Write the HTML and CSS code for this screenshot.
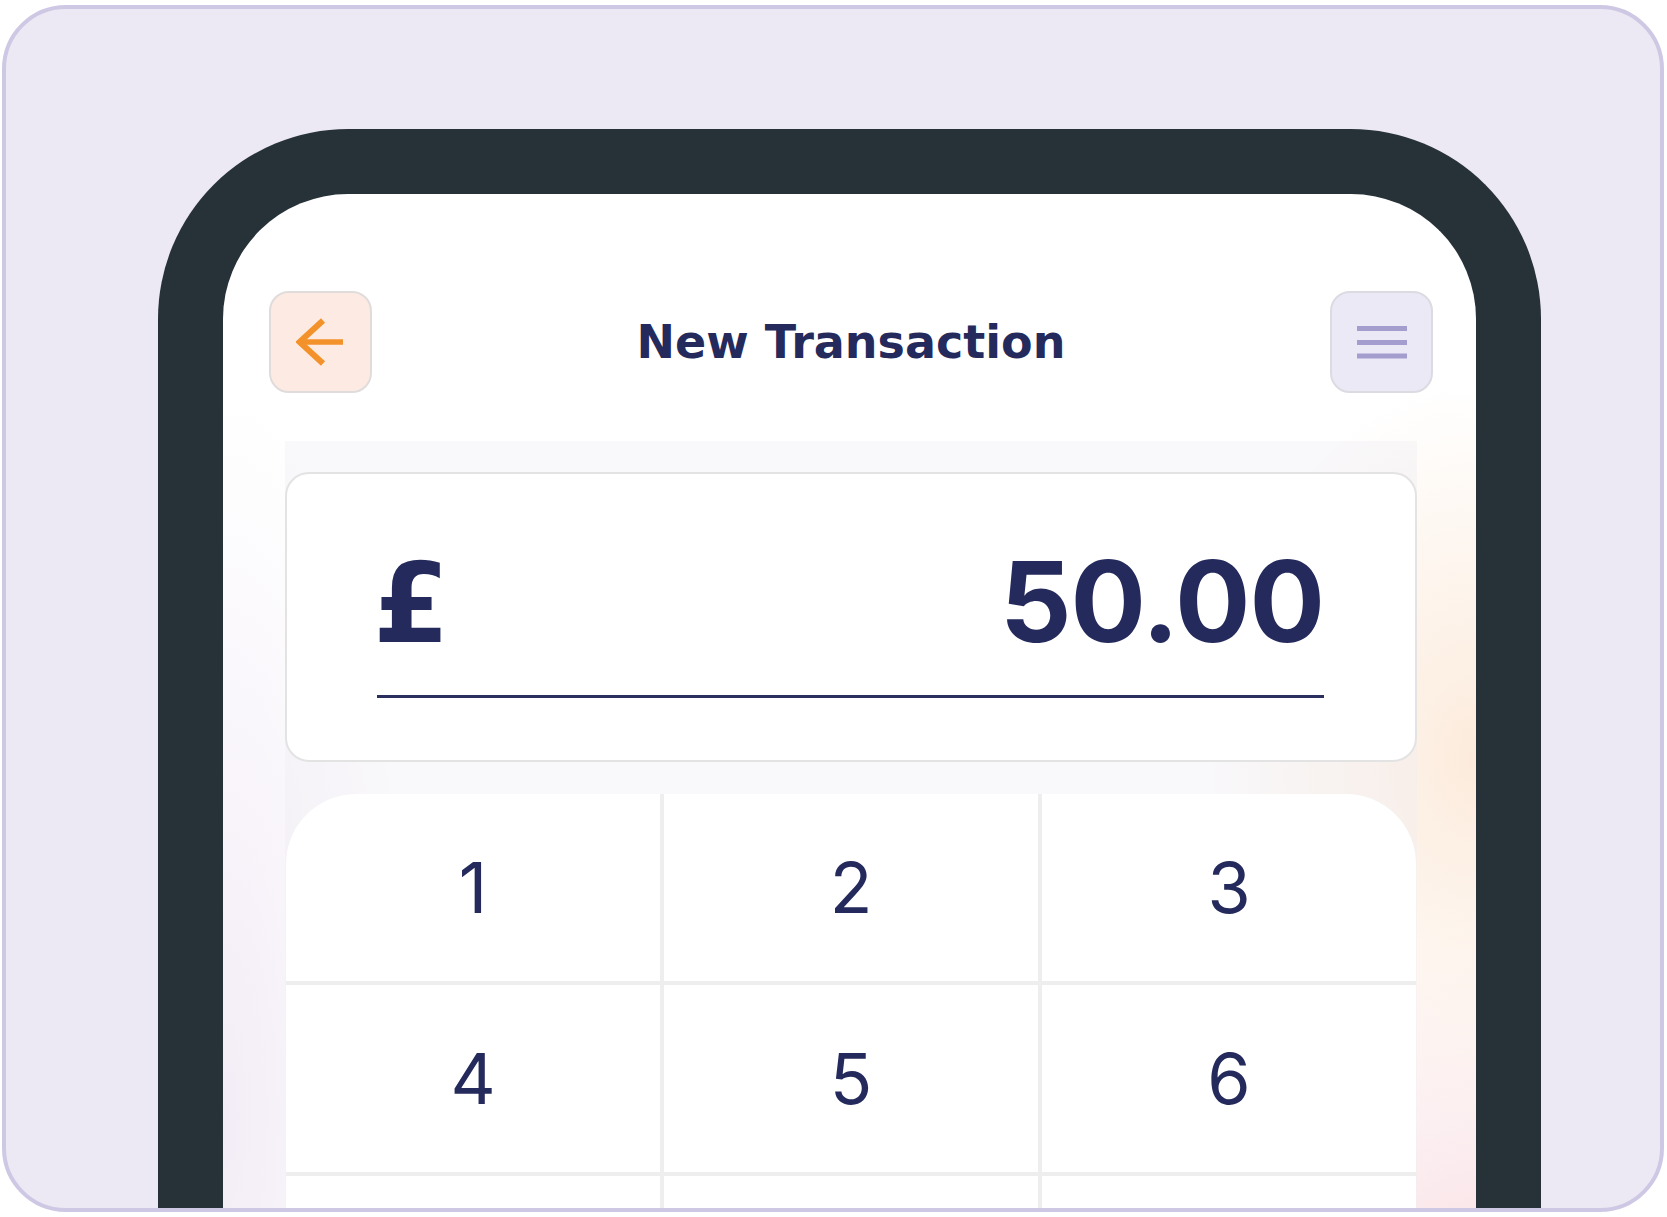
FILE: index.html
```html
<!DOCTYPE html>
<html lang="en">
<head>
<meta charset="utf-8">
<title>New Transaction</title>
<link rel="stylesheet" href="styles.css">
</head>
<body>
<div class="frame">
  <div class="phone">
    <div class="screen">
      <header class="topbar">
        <button class="icon-btn back" aria-label="Back">
          <svg class="arrow" width="50" height="50" viewBox="0 0 50 50">
            <polyline points="27,3.5 3.5,25 27,46.5" fill="none" stroke="#f3922a" stroke-width="6" stroke-linejoin="miter"/>
            <line x1="5" y1="25" x2="47" y2="25" stroke="#f3922a" stroke-width="5.5"/>
          </svg>
        </button>
        <h1 class="title">New Transaction</h1>
        <button class="icon-btn menu" aria-label="Menu">
          <svg width="50" height="34" viewBox="0 0 50 34">
            <rect x="0" y="1" width="50" height="5" fill="#a39ece"/>
            <rect x="0" y="15" width="50" height="5" fill="#a39ece"/>
            <rect x="0" y="28.5" width="50" height="5" fill="#a39ece"/>
          </svg>
        </button>
      </header>
      <section class="panel">
        <div class="amount-card">
          <div class="amount-row">
            <span class="currency">£</span>
            <span class="value">50.00</span>
          </div>
          <div class="amount-line"></div>
        </div>
        <div class="keypad">
          <div class="key">1</div>
          <div class="key">2</div>
          <div class="key">3</div>
          <div class="key">4</div>
          <div class="key">5</div>
          <div class="key">6</div>
          <div class="key"></div>
          <div class="key"></div>
          <div class="key"></div>
        </div>
      </section>
    </div>
  </div>
</div>
</body>
</html>
```

FILE: styles.css
```css
html, body {
  margin: 0;
  padding: 0;
}

body {
  width: 1667px;
  height: 1217px;
  background: #ffffff;
  font-family: Inter, "Liberation Sans", sans-serif;
  color: #242a5b;
  overflow: hidden;
}

.frame {
  box-sizing: border-box;
  margin: 5px 0 0 2px;
  width: 1662px;
  height: 1207px;
  border: 4px solid #cfc8e4;
  border-radius: 64px;
  background: #ece9f4;
  overflow: hidden;
  padding: 120px 0 0 152px;
}

.phone {
  box-sizing: border-box;
  width: 1383px;
  height: 1150px;
  border: 65px solid #263238;
  border-bottom: 0;
  border-radius: 190px 190px 0 0;
  background:
    radial-gradient(ellipse 340px 480px at 100% 52%, rgba(252, 234, 218, 0.95), rgba(252, 234, 218, 0) 78%),
    radial-gradient(ellipse 380px 440px at 100% 100%, rgba(249, 224, 228, 0.95), rgba(249, 224, 228, 0) 80%),
    radial-gradient(ellipse 240px 900px at 0% 85%, rgba(242, 235, 246, 0.95), rgba(242, 235, 246, 0) 80%),
    #ffffff;
}

.screen {
  width: 1253px;
}

.topbar {
  display: flex;
  align-items: center;
  justify-content: space-between;
  padding: 97px 43px 0 46px;
}

.icon-btn {
  box-sizing: border-box;
  width: 103px;
  height: 102px;
  border-radius: 20px;
  border: 2px solid #e0dcdc;
  padding: 0;
  display: flex;
  align-items: center;
  justify-content: center;
  cursor: pointer;
}

.icon-btn svg {
  display: block;
  flex: none;
}

.back {
  background: #fdebe3;
}

.menu {
  background: #ebe9f6;
  border-color: #dcdbe2;
}

.title {
  margin: 0;
  font-family: "DejaVu Sans", "Open Sans", sans-serif;
  font-size: 46px;
  font-weight: 700;
  letter-spacing: 0;
  line-height: 1;
  color: #242a5b;
}

.panel {
  margin: 48px 59px 0 62px;
  padding-top: 31px;
  background: rgba(240, 238, 243, 0.4);
}

.amount-card {
  box-sizing: border-box;
  background: #ffffff;
  border: 2px solid #e3e3e4;
  border-radius: 24px;
  padding: 71px 91px 62px 90px;
}

.amount-row {
  display: flex;
  justify-content: space-between;
  align-items: baseline;
  height: 112px;
  font-size: 112px;
  font-weight: 700;
  line-height: 1;
  color: #242a5b;
}

.currency {
  font-family: "DejaVu Sans", Inter, sans-serif;
  font-size: 110px;
  margin-left: -4px;
}

.value {
  letter-spacing: -1px;
}

.amount-line {
  margin-top: 38px;
  height: 3px;
  background: #2a2f5d;
}

.keypad {
  margin: 32px 1px 0 1px;
  display: grid;
  grid-template-columns: repeat(3, 1fr);
  grid-auto-rows: 187px;
  gap: 4px;
  background: #eeeeee;
  border-radius: 70px 70px 0 0;
  overflow: hidden;
}

.key {
  background: #ffffff;
  display: flex;
  align-items: center;
  justify-content: center;
  font-size: 70px;
  font-weight: 400;
  line-height: 1;
  color: #242a5b;
}
```
